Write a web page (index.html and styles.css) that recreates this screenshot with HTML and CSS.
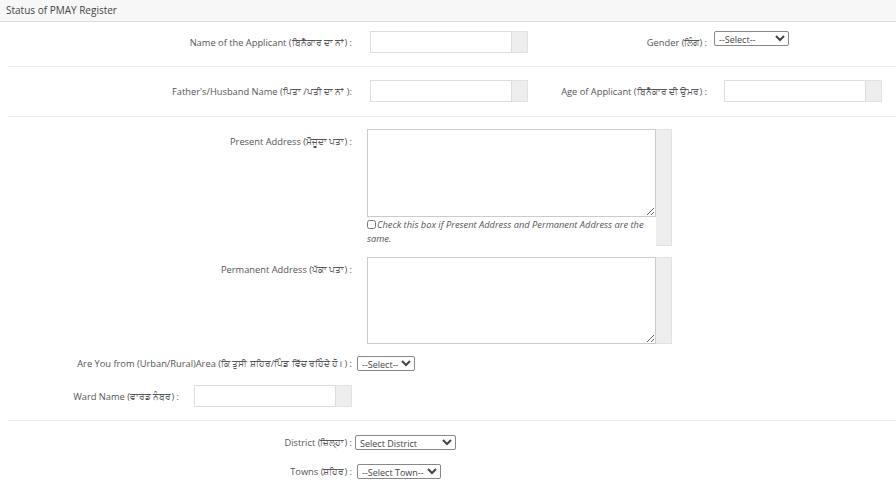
FILE: index.html
```html
<!DOCTYPE html>
<html lang="en">
<head>
    <meta charset="UTF-8">
    <meta name="viewport" content="width=device-width, initial-scale=1.0">
    <title>Status of PMAY Register</title>
    <link rel="stylesheet" href="styles.css">
</head>
<body>
    <div class="panel">
        <div class="panel-heading">Status of PMAY Register</div>

        <div class="row row-1">
            <label class="lbl">Name of the Applicant (ਬਿਨੈਕਾਰ ਦਾ ਨਾਂ) :</label>
            <div class="input-group field">
                <input type="text" class="form-control">
                <span class="addon"></span>
            </div>
            <label class="lbl lbl-2">Gender (ਲਿੰਗ) :</label>
            <select class="sel sel-gender">
                <option>--Select--</option>
            </select>
        </div>

        <div class="sep"></div>

        <div class="row row-2">
            <label class="lbl">Father's/Husband Name (ਪਿਤਾ /ਪਤੀ ਦਾ ਨਾਂ ):</label>
            <div class="input-group field">
                <input type="text" class="form-control">
                <span class="addon"></span>
            </div>
            <label class="lbl lbl-2">Age of Applicant (ਬਿਨੈਕਾਰ ਦੀ ਉਮਰ) :</label>
            <div class="input-group field-age">
                <input type="text" class="form-control">
                <span class="addon"></span>
            </div>
        </div>

        <div class="sep"></div>

        <div class="row row-addr">
            <label class="lbl lbl-top">Present Address (ਮੌਜੂਦਾ ਪਤਾ) :</label>
            <div class="addr-group">
                <div class="addr-main">
                    <textarea class="addr-box"></textarea>
                    <div class="same-note"><input type="checkbox" class="chk">Check this box if Present Address and Permanent Address are the same.</div>
                </div>
                <span class="addon"></span>
            </div>
        </div>

        <div class="row row-addr row-perm">
            <label class="lbl lbl-top">Permanent Address (ਪੱਕਾ ਪਤਾ) :</label>
            <div class="addr-group">
                <div class="addr-main">
                    <textarea class="addr-box"></textarea>
                </div>
                <span class="addon"></span>
            </div>
        </div>

        <div class="row row-area">
            <label class="lbl">Are You from (Urban/Rural)Area (ਕਿ ਤੁਸੀ ਸ਼ਹਿਰ/ਪਿੰਡ ਵਿੱਚ ਰਹਿੰਦੇ ਹੋ। ) :</label>
            <select class="sel sel-area">
                <option>--Select--</option>
            </select>
        </div>

        <div class="row row-ward">
            <label class="lbl lbl-ward">Ward Name (ਵਾਰਡ ਨੰਬਰ) :</label>
            <div class="input-group field-ward">
                <input type="text" class="form-control">
                <span class="addon"></span>
            </div>
        </div>

        <div class="sep"></div>

        <div class="row row-district">
            <label class="lbl">District (ਜ਼ਿਲ੍ਹਾ) :</label>
            <select class="sel sel-district">
                <option>Select District</option>
            </select>
        </div>

        <div class="row row-town">
            <label class="lbl">Towns (ਸ਼ਹਿਰ) :</label>
            <select class="sel sel-town">
                <option>--Select Town--</option>
            </select>
        </div>
    </div>
</body>
</html>
```

FILE: styles.css
```css
body {
    margin: 0;
    padding: 0;
    background-color: #fff;
    font-family: "Open Sans", "Noto Sans", sans-serif;
    font-size: 9.3px;
    color: #555;
}
.panel-heading {
    height: 21px;
    line-height: 20px;
    padding-left: 6px;
    font-size: 10px;
    color: #444;
    background-color: #f7f7f7;
    border-bottom: 1px solid #ddd;
}
.sep {
    margin-left: 8px;
    border-top: 1px solid #eee;
}
.row {
    display: flex;
    align-items: center;
}
.lbl {
    flex: none;
    width: 362px;
    padding-right: 10px;
    box-sizing: border-box;
    text-align: right;
    white-space: nowrap;
}
.lbl-2 {
    width: 188px;
    padding-right: 9px;
}
.lbl-top {
    align-self: flex-start;
    padding-top: 6px;
}
.input-group {
    display: flex;
    height: 22px;
}
.form-control {
    width: 142px;
    height: 22px;
    margin: 0;
    padding: 0 4px;
    box-sizing: border-box;
    border: 1px solid #ddd;
    font-family: inherit;
    font-size: 9px;
}
.addon {
    width: 16px;
    box-sizing: border-box;
    background-color: #eee;
    border: 1px solid #e2e2e2;
    border-left: none;
}
.field {
    margin-left: 8px;
}
.row-1 {
    padding: 9px 0 13px;
}
.row-2 {
    padding: 13px 0 14px;
}
.sel {
    height: 15px;
    margin: 0;
    padding: 0;
    font-family: inherit;
    font-size: 9px;
    color: #444;
    background-color: #fff;
    border: 1px solid #888;
    border-radius: 2px;
}
.sel-gender {
    width: 75px;
    margin-left: -2px;
    align-self: flex-start;
}
.field-age {
    margin-left: 8px;
}
.row-addr {
    align-items: flex-start;
    padding-top: 12px;
}
.row-perm {
    padding-top: 11px;
}
.addr-group {
    display: flex;
    margin-left: 5px;
}
.addr-main {
    width: 289px;
}
.addr-box {
    display: block;
    width: 289px;
    height: 88px;
    margin: 0;
    box-sizing: border-box;
    border: 1px solid #ccc;
    font-family: inherit;
}
.row-perm .addr-box {
    height: 87px;
}
.same-note {
    font-style: italic;
    line-height: 14px;
    padding-top: 1px;
    color: #555;
}
.chk {
    width: 9px;
    height: 9px;
    margin: 0 1px 0 0;
    vertical-align: -1px;
}
.row-area {
    padding-top: 12px;
}
.sel-area {
    width: 58px;
    margin-left: -5px;
}
.row-ward {
    padding: 14px 0 13px;
}
.lbl-ward {
    width: 184px;
    padding-right: 5px;
}
.field-ward {
    margin-left: 10px;
}
.row-district {
    padding-top: 14px;
}
.sel-district {
    width: 101px;
    margin-left: -7px;
}
.row-town {
    padding-top: 14px;
}
.sel-town {
    width: 84px;
    margin-left: -5px;
}
```
